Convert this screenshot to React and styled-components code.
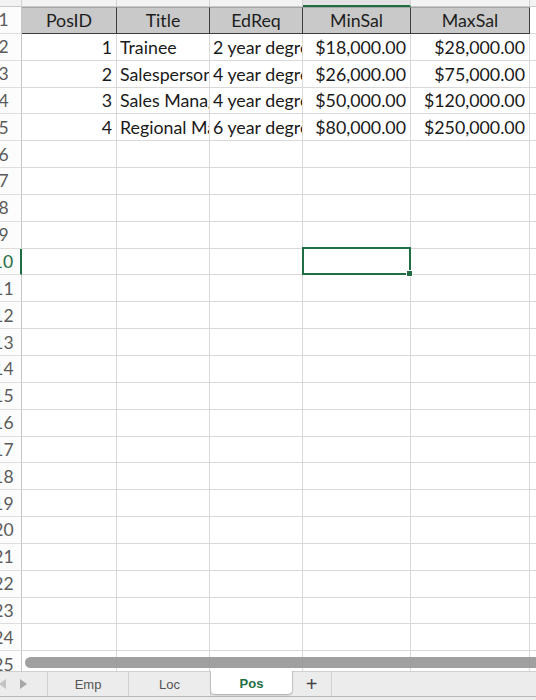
import React from "react";
import styled, { createGlobalStyle, css } from "styled-components";

const GREEN = "#1f6e43";

const Global = createGlobalStyle`
  html, body { margin: 0; padding: 0; background: #fff; overflow: hidden; }
  * { box-sizing: border-box; }
`;

const Page = styled.div`
  width: 536px;
  height: 700px;
  display: flex;
  flex-direction: column;
  overflow: hidden;
  background: #ececec;
  font-family: Lato, "Open Sans", sans-serif;
`;

const SheetArea = styled.div`
  position: relative;
  height: 671px;
  flex: none;
  overflow: hidden;
  background: #fff;
`;

const Grid = styled.div`
  display: grid;
  grid-template-columns: 36px 95px 93px 93px 108px 119px 120px;
  grid-template-rows: 7px repeat(25, 26.85px);
  margin-left: -14px;
  width: 664px;
`;

const StripCell = styled.div`
  background: #f3f3f3;
  border-right: 1px solid #d2d2d2;
  border-bottom: 1px solid #c9c9c9;
  ${(p) =>
    p.$active &&
    css`
      background: #e3e3e3;
      border-bottom: 2px solid ${GREEN};
    `}
`;

const RowHead = styled.div`
  display: flex;
  align-items: center;
  justify-content: center;
  font-size: 17.5px;
  color: #5b5b5b;
  border-right: 1px solid #c6c6c6;
  border-bottom: 1px solid #dedede;
  background: #fcfcfc;
  overflow: hidden;
  ${(p) =>
    p.$active &&
    css`
      color: ${GREEN};
      border-right: 2px solid ${GREEN};
    `}
`;

const HeaderCell = styled.div`
  display: flex;
  align-items: center;
  justify-content: center;
  font-size: 17.8px;
  color: #1d1d1d;
  background: #c9c9c9;
  border-right: 1px solid #3d3d3d;
  border-bottom: 1px solid #3d3d3d;
  border-top: 1px solid #a5a5a5;
  white-space: nowrap;
  overflow: hidden;
`;

const Cell = styled.div`
  position: relative;
  display: flex;
  align-items: center;
  justify-content: ${(p) => (p.$align === "right" ? "flex-end" : "flex-start")};
  padding: ${(p) => (p.$align === "right" ? "0 4px 0 0" : "0 0 0 3px")};
  font-size: 17.8px;
  color: #1a1a1a;
  border-right: 1px solid #d9d9d9;
  border-bottom: 1px solid #d9d9d9;
  white-space: nowrap;
  overflow: ${(p) => (p.$selected ? "visible" : "hidden")};
  ${(p) =>
    p.$selected &&
    css`
      &::before {
        content: "";
        position: absolute;
        top: -2px;
        left: -1px;
        right: -1px;
        bottom: -1px;
        border: 2px solid ${GREEN};
        z-index: 2;
      }
      &::after {
        content: "";
        position: absolute;
        right: -3px;
        bottom: -3px;
        width: 5px;
        height: 5px;
        background: ${GREEN};
        border: 1px solid #fff;
        z-index: 3;
      }
    `}
`;

const ScrollThumb = styled.div`
  position: absolute;
  left: 25px;
  right: -20px;
  bottom: 3px;
  height: 11px;
  border-radius: 6px;
  background: rgba(150, 150, 150, 0.9);
`;

const TabBar = styled.div`
  display: flex;
  height: 26px;
  flex: none;
  background: #ececec;
  border-top: 1px solid #cfcfcf;
  border-bottom: 1px solid #b9b9b9;
  font-family: "Liberation Sans", Arial, sans-serif;
  font-size: 13px;
`;

const Nav = styled.div`
  width: 48px;
  display: flex;
  align-items: center;
  padding-left: 1px;
  gap: 14px;
  border-right: 1px solid #d0d0d0;
`;

const Arrow = styled.span`
  width: 0;
  height: 0;
  border-top: 5px solid transparent;
  border-bottom: 5px solid transparent;
  ${(p) =>
    p.$dir === "left"
      ? css`
          border-right: 7px solid #c4c4c4;
          margin-left: -2px;
        `
      : css`
          border-left: 7px solid #a7a7a7;
        `}
`;

const Tab = styled.div`
  width: ${(p) => (p.$w ? p.$w : 81)}px;
  display: flex;
  align-items: center;
  justify-content: center;
  color: #555;
  border-right: 1px solid #d0d0d0;
  ${(p) =>
    p.$active &&
    css`
      background: #fff;
      color: ${GREEN};
      font-weight: 700;
      margin-top: -1px;
      height: 23px;
      border-right: none;
      border-radius: 0 0 4px 4px;
      box-shadow: 0 1px 2px rgba(0, 0, 0, 0.3), 1px 0 1px rgba(0, 0, 0, 0.1);
      padding-top: 1px;
    `}
`;

const Plus = styled.div`
  width: 40px;
  display: flex;
  align-items: center;
  justify-content: center;
  border-right: 1px solid #d0d0d0;
  color: #444;
  font-size: 20px;
  font-weight: 400;
`;

const headers = ["PosID", "Title", "EdReq", "MinSal", "MaxSal"];
const data = [
  [1, "Trainee", "2 year degree", 18000, 28000],
  [2, "Salesperson", "4 year degree", 26000, 75000],
  [3, "Sales Manager", "4 year degree", 50000, 120000],
  [4, "Regional Manager", "6 year degree", 80000, 250000],
];

const money = (n) =>
  "$" + n.toLocaleString("en-US", { minimumFractionDigits: 2, maximumFractionDigits: 2 });

const COLS = 6;

export default function App() {
  const rows = [];
  for (let r = 1; r <= 25; r++) {
    const active = r === 10;
    rows.push(
      <RowHead key={"h" + r} $active={active}>
        {r}
      </RowHead>
    );
    if (r === 1) {
      headers.forEach((h) => rows.push(<HeaderCell key={"hc" + h}>{h}</HeaderCell>));
      rows.push(<Cell key="hF" />);
    } else if (r <= 5) {
      const d = data[r - 2];
      rows.push(<Cell key={r + "a"} $align="right">{d[0]}</Cell>);
      rows.push(<Cell key={r + "b"}>{d[1]}</Cell>);
      rows.push(<Cell key={r + "c"}>{d[2]}</Cell>);
      rows.push(<Cell key={r + "d"} $align="right">{money(d[3])}</Cell>);
      rows.push(<Cell key={r + "e"} $align="right">{money(d[4])}</Cell>);
      rows.push(<Cell key={r + "f"} />);
    } else {
      for (let c = 0; c < COLS; c++) {
        rows.push(<Cell key={r + "-" + c} $selected={active && c === 3} />);
      }
    }
  }

  return (
    <Page>
      <Global />
      <SheetArea>
        <Grid>
          <StripCell />
          {[0, 1, 2, 3, 4, 5].map((c) => (
            <StripCell key={"s" + c} $active={c === 3} />
          ))}
          {rows}
        </Grid>
        <ScrollThumb />
      </SheetArea>
      <TabBar>
        <Nav>
          <Arrow $dir="left" />
          <Arrow $dir="right" />
        </Nav>
        <Tab>Emp</Tab>
        <Tab $w={82}>Loc</Tab>
        <Tab $active>Pos</Tab>
        <Plus>+</Plus>
      </TabBar>
    </Page>
  );
}
